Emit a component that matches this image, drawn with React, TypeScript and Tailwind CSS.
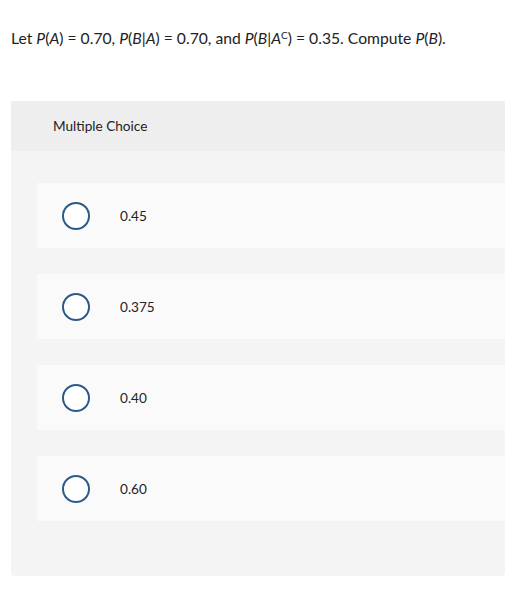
const options = ['0.45', '0.375', '0.40', '0.60'];

export default function App() {
  return (
    <div className="min-h-[614px] w-[505px] bg-white font-['Lato',sans-serif] text-[#222] overflow-hidden">
      {/* question */}
      <p className="pl-[11px] pt-[28px] text-[15.7px] leading-[20px] whitespace-nowrap">
        Let <i>P</i>(<i>A</i>) = 0.70, <i>P</i>(<i>B</i>|<i>A</i>) = 0.70, and <i>P</i>(<i>B</i>|<i>A</i>
        <sup className="text-[10px]">C</sup>) = 0.35. Compute <i>P</i>(<i>B</i>).
      </p>

      <div className="ml-[11px] mt-[53px] bg-[#f4f4f4] rounded-b-sm">
        <div className="h-[50px] bg-[#eeeeee] pl-[42px] flex items-center text-[13.6px]">Multiple Choice</div>
        <div className="pl-[26px] pt-[32px] pb-[55px] flex flex-col gap-[26px]">
          {options.map((opt) => (
            <div key={opt} className="h-[65px] bg-[#fafafa] flex items-center">
              <span className="ml-[25px] w-[28px] h-[28px] rounded-full border-2 border-[#2b5a88] bg-white" />
              <span className="ml-[30px] pt-[2px] text-[13.6px]">{opt}</span>
            </div>
          ))}
        </div>
      </div>
    </div>
  );
}
